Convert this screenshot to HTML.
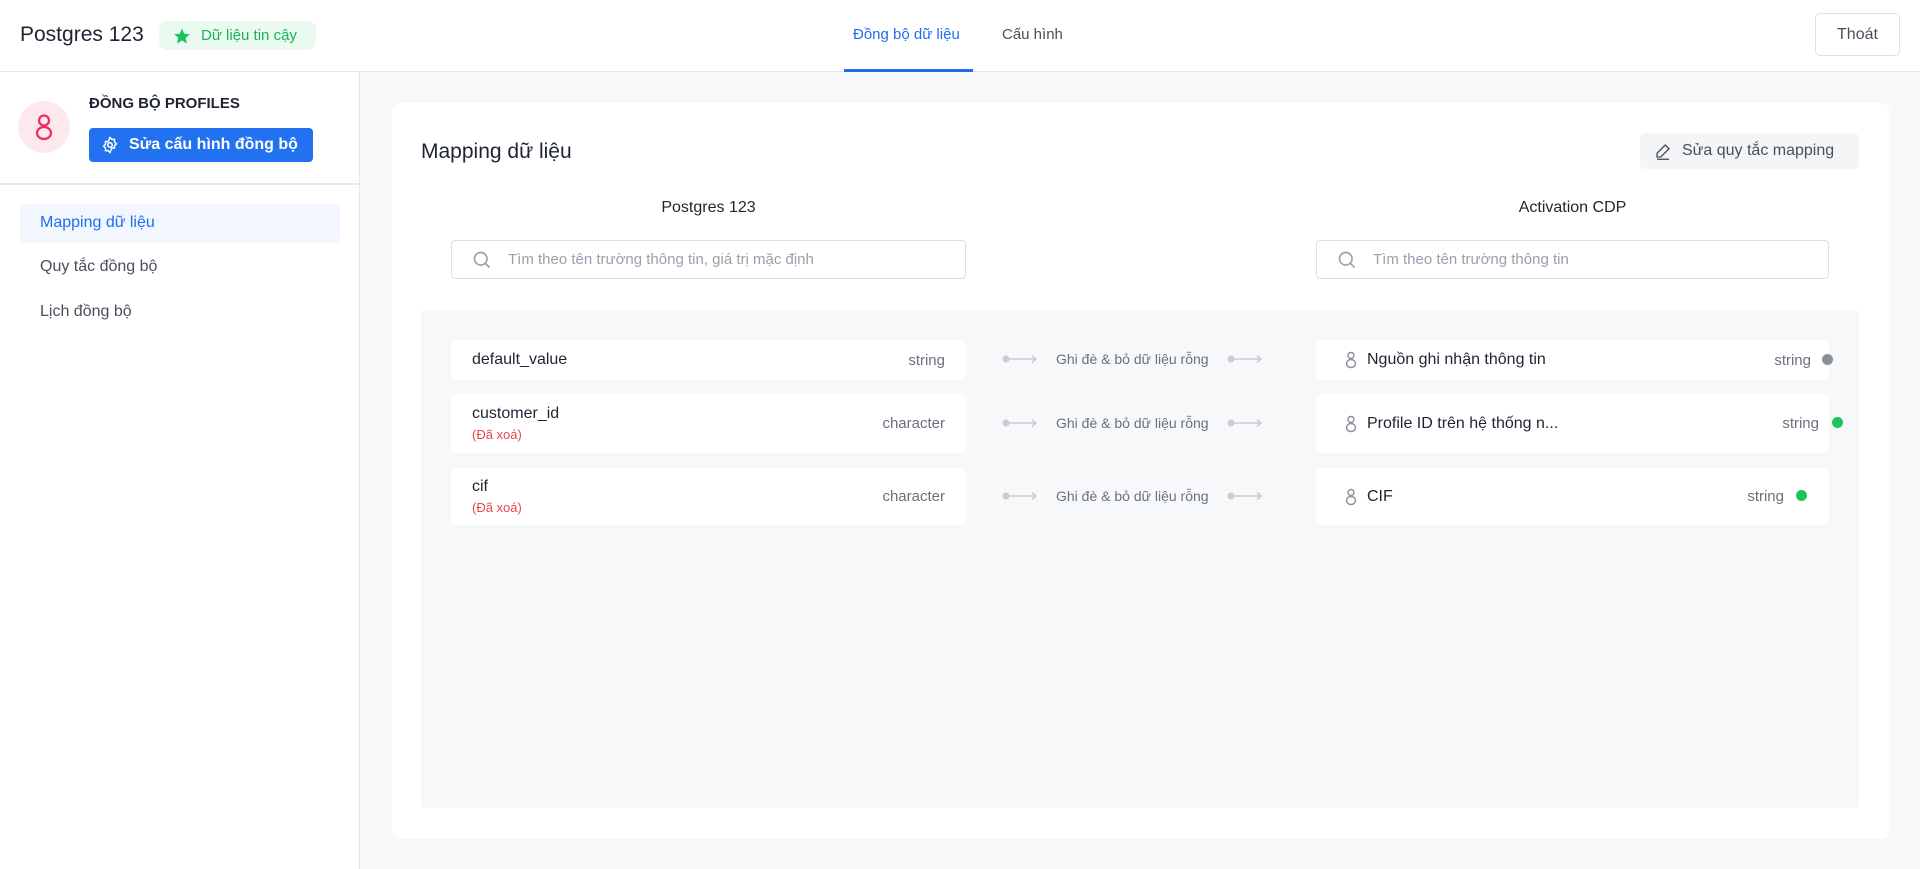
<!DOCTYPE html>
<html><head><meta charset="utf-8"><style>
*{box-sizing:border-box;margin:0;padding:0}
body{width:1920px;height:869px;overflow:hidden;font-family:"Liberation Sans",sans-serif;background:#f7f8fa;color:#1f2433;position:relative}
.a{position:absolute}
.hdr{left:0;top:0;width:1920px;height:72px;background:#fff;border-bottom:1px solid #e4e6ea}
.side{left:0;top:72px;width:360px;height:797px;background:#fff;border-right:1px solid #e4e6ea}
.card{left:392px;top:103px;width:1498px;height:736px;background:#fff;border-radius:10px}
.gray{left:421px;top:310px;width:1438px;height:498px;background:#f7f8fa;border-radius:4px}
.row{background:#fff;border-radius:5px;display:flex;align-items:center;padding:0 21px;font-size:16px}
.t{margin-left:auto;color:#6b7080;font-size:15px}
.del{color:#e5484d;font-size:13px;margin-top:4px}
.mid{font-size:14px;color:#6b7080;display:flex;align-items:center}
.arr{width:36px;height:10px;margin:0 18px}
.search{background:#fff;border:1px solid #dcdfe4;border-radius:4px;height:39px;display:flex;align-items:center;padding-left:20px;color:#9aa0ac;font-size:15px}
.dot{width:11px;height:11px;border-radius:50%}
</style></head><body>
<div class="a hdr"></div>
<div class="a" style="left:20px;top:23px;font-size:21px;color:#1f2433">Postgres 123</div>
<div class="a" style="left:159px;top:21px;width:157px;height:29px;background:#eafaf0;border-radius:8px;color:#16b35a;font-size:15px;display:flex;align-items:center;padding-left:14px">
<svg width="18" height="18" viewBox="0 0 24 24" style="margin-right:10px"><path d="M12 2l3 7 7.5.6-5.7 4.9 1.8 7.5L12 18l-6.6 4 1.8-7.5L1.5 9.6 9 9z" fill="#16c45e"/></svg>Dữ liệu tin cậy</div>
<div class="a" style="left:853px;top:26px;font-size:15px;color:#1f6ef0">Đồng bộ dữ liệu</div>
<div class="a" style="left:844px;top:69px;width:129px;height:3px;background:#1f6ef0"></div>
<div class="a" style="left:1002px;top:26px;font-size:15px;color:#4a4f5c">Cấu hình</div>
<div class="a" style="left:1815px;top:13px;width:85px;height:43px;border:1px solid #dcdfe4;border-radius:5px;font-size:16px;color:#4a4f5c;display:flex;align-items:center;justify-content:center">Thoát</div>

<div class="a side"></div>
<div class="a" style="left:18px;top:101px;width:52px;height:52px;border-radius:50%;background:#fde8ee"></div>
<svg class="a" style="left:34px;top:113px" width="20" height="28" viewBox="0 0 20 28"><circle cx="10" cy="7.5" r="5" fill="none" stroke="#ec2e5e" stroke-width="2.2"/><ellipse cx="10" cy="20" rx="7" ry="6" fill="none" stroke="#ec2e5e" stroke-width="2.2"/></svg>
<div class="a" style="left:89px;top:95px;font-size:15px;font-weight:bold;color:#1f2433">ĐỒNG BỘ PROFILES</div>
<div class="a" style="left:89px;top:128px;width:224px;height:34px;background:#2271f0;border-radius:4px;color:#fff;font-size:16px;font-weight:bold;display:flex;align-items:center;padding-left:12px">
<svg width="18" height="18" viewBox="0 0 24 24" style="margin-right:10px" fill="none" stroke="#fff" stroke-width="2"><circle cx="12" cy="12" r="3"/><path d="M12 2l2.5 2.5H18v3.5l2.5 2.5-2.5 2.5V16h-3.5L12 22l-2.5-2.5H6V16l-2.5-2.5L6 11V7.5h3.5z"/></svg>Sửa cấu hình đồng bộ</div>
<div class="a" style="left:0;top:183px;width:360px;height:2px;background:#e8eaed"></div>
<div class="a" style="left:20px;top:204px;width:320px;height:39px;background:#f2f6fe;border-radius:5px;color:#1f6ef0;font-size:16px;padding:10px 0 0 20px">Mapping dữ liệu</div>
<div class="a" style="left:40px;top:258px;font-size:16px;color:#4a4f5c">Quy tắc đồng bộ</div>
<div class="a" style="left:40px;top:303px;font-size:16px;color:#4a4f5c">Lịch đồng bộ</div>

<div class="a card"></div>
<div class="a" style="left:421px;top:140px;font-size:21px;color:#1f2433">Mapping dữ liệu</div>
<div class="a" style="left:1640px;top:133px;width:219px;height:36px;background:#f4f5f7;border-radius:5px;font-size:16px;color:#4a4f5c;display:flex;align-items:center;padding-left:14px">
<svg width="18" height="18" viewBox="0 0 24 24" style="margin-right:10px" fill="none" stroke="#4a4f5c" stroke-width="1.8"><path d="M15 4l5 5L9 20H4v-5z"/><path d="M4 23h16"/></svg>Sửa quy tắc mapping</div>
<div class="a" style="left:451px;top:199px;width:515px;text-align:center;font-size:16px">Postgres 123</div>
<div class="a" style="left:1316px;top:199px;width:513px;text-align:center;font-size:16px">Activation CDP</div>
<div class="a search" style="left:451px;top:240px;width:515px"><svg width="20" height="20" viewBox="0 0 24 24" style="margin-right:16px" fill="none" stroke="#9aa0ac" stroke-width="2"><circle cx="10.5" cy="10.5" r="7.5"/><path d="M16 16l5 5"/></svg>Tìm theo tên trường thông tin, giá trị mặc định</div>
<div class="a search" style="left:1316px;top:240px;width:513px"><svg width="20" height="20" viewBox="0 0 24 24" style="margin-right:16px" fill="none" stroke="#9aa0ac" stroke-width="2"><circle cx="10.5" cy="10.5" r="7.5"/><path d="M16 16l5 5"/></svg>Tìm theo tên trường thông tin</div>

<div class="a gray"></div>

<div class="a row" style="left:451px;top:340px;width:515px;height:40px">default_value<span class="t">string</span></div>
<div class="a row" style="left:451px;top:394px;width:515px;height:59px"><div>customer_id<div class="del">(Đã xoá)</div></div><span class="t">character</span></div>
<div class="a row" style="left:451px;top:468px;width:515px;height:57px"><div>cif<div class="del">(Đã xoá)</div></div><span class="t">character</span></div>

<div class="a mid" style="left:984px;top:351px"><svg class="arr" viewBox="0 0 36 10"><circle cx="4" cy="5" r="3.5" fill="#c8ccd3"/><path d="M4 5h30M30 1.5l4 3.5-4 3.5" stroke="#c8ccd3" stroke-width="1.5" fill="none"/></svg>Ghi đè &amp; bỏ dữ liệu rỗng<svg class="arr" viewBox="0 0 36 10"><circle cx="4" cy="5" r="3.5" fill="#c8ccd3"/><path d="M4 5h30M30 1.5l4 3.5-4 3.5" stroke="#c8ccd3" stroke-width="1.5" fill="none"/></svg></div>
<div class="a mid" style="left:984px;top:415px"><svg class="arr" viewBox="0 0 36 10"><circle cx="4" cy="5" r="3.5" fill="#c8ccd3"/><path d="M4 5h30M30 1.5l4 3.5-4 3.5" stroke="#c8ccd3" stroke-width="1.5" fill="none"/></svg>Ghi đè &amp; bỏ dữ liệu rỗng<svg class="arr" viewBox="0 0 36 10"><circle cx="4" cy="5" r="3.5" fill="#c8ccd3"/><path d="M4 5h30M30 1.5l4 3.5-4 3.5" stroke="#c8ccd3" stroke-width="1.5" fill="none"/></svg></div>
<div class="a mid" style="left:984px;top:488px"><svg class="arr" viewBox="0 0 36 10"><circle cx="4" cy="5" r="3.5" fill="#c8ccd3"/><path d="M4 5h30M30 1.5l4 3.5-4 3.5" stroke="#c8ccd3" stroke-width="1.5" fill="none"/></svg>Ghi đè &amp; bỏ dữ liệu rỗng<svg class="arr" viewBox="0 0 36 10"><circle cx="4" cy="5" r="3.5" fill="#c8ccd3"/><path d="M4 5h30M30 1.5l4 3.5-4 3.5" stroke="#c8ccd3" stroke-width="1.5" fill="none"/></svg></div>

<div class="a row" style="left:1316px;top:340px;width:513px;height:40px;padding-right:18px"><svg width="12" height="18" viewBox="0 0 12 18" style="margin:0 10px 0 8px"><circle cx="6" cy="4.5" r="3" fill="none" stroke="#8a8f9a" stroke-width="1.4"/><ellipse cx="6" cy="12.5" rx="4.5" ry="4" fill="none" stroke="#8a8f9a" stroke-width="1.4"/></svg>Nguồn ghi nhận thông tin<span class="t">string</span></div>
<div class="a row" style="left:1316px;top:394px;width:513px;height:59px;padding-right:10px"><svg width="12" height="18" viewBox="0 0 12 18" style="margin:0 10px 0 8px"><circle cx="6" cy="4.5" r="3" fill="none" stroke="#8a8f9a" stroke-width="1.4"/><ellipse cx="6" cy="12.5" rx="4.5" ry="4" fill="none" stroke="#8a8f9a" stroke-width="1.4"/></svg>Profile ID trên hệ thống n...<span class="t">string</span></div>
<div class="a row" style="left:1316px;top:468px;width:513px;height:57px;padding-right:45px"><svg width="12" height="18" viewBox="0 0 12 18" style="margin:0 10px 0 8px"><circle cx="6" cy="4.5" r="3" fill="none" stroke="#8a8f9a" stroke-width="1.4"/><ellipse cx="6" cy="12.5" rx="4.5" ry="4" fill="none" stroke="#8a8f9a" stroke-width="1.4"/></svg>CIF<span class="t">string</span></div>
<div class="a dot" style="left:1822px;top:354px;background:#8a8f9a"></div>
<div class="a dot" style="left:1832px;top:417px;background:#1fc35e"></div>
<div class="a dot" style="left:1796px;top:490px;background:#1fc35e"></div>
</body></html>
